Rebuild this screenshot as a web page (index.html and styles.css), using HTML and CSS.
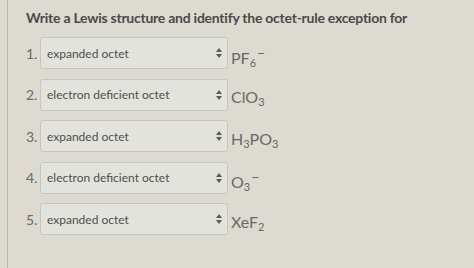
FILE: index.html
```
<!DOCTYPE html>
<html lang="en">
<head>
    <meta charset="UTF-8">
    <title>Octet-rule exceptions</title>
    <link rel="stylesheet" href="styles.css">
</head>
<body>
    <div class="panel">
        <h1 class="question">Write a Lewis structure and identify the octet-rule exception for</h1>
        <ol class="answers">
            <li class="answer">
                <span class="num">1.</span>
                <div class="select"><span>expanded octet</span><i class="arrows"></i></div>
                <span class="formula">PF<sub>6</sub><sup>&minus;</sup></span>
            </li>
            <li class="answer">
                <span class="num">2.</span>
                <div class="select"><span>electron deficient octet</span><i class="arrows"></i></div>
                <span class="formula">ClO<sub>3</sub></span>
            </li>
            <li class="answer">
                <span class="num">3.</span>
                <div class="select"><span>expanded octet</span><i class="arrows"></i></div>
                <span class="formula">H<sub>3</sub>PO<sub>3</sub></span>
            </li>
            <li class="answer">
                <span class="num">4.</span>
                <div class="select"><span>electron deficient octet</span><i class="arrows"></i></div>
                <span class="formula">O<sub>3</sub><sup>&minus;</sup></span>
            </li>
            <li class="answer">
                <span class="num">5.</span>
                <div class="select"><span>expanded octet</span><i class="arrows"></i></div>
                <span class="formula">XeF<sub>2</sub></span>
            </li>
        </ol>
    </div>
</body>
</html>
```

FILE: styles.css
```
* {
    margin: 0;
    padding: 0;
    box-sizing: border-box;
    font-family: Lato, 'Open Sans', sans-serif;
}

body {
    background-color: #dddad2;
    width: 474px;
    height: 268px;
    overflow: hidden;
}

.panel {
    margin-left: 7px;
    border-left: 1px solid #b9b6ae;
    height: 268px;
    padding: 9px 0 0 18px;
}

.question {
    font-size: 14px;
    font-weight: bold;
    color: #4a4a48;
    line-height: 18px;
    letter-spacing: -0.25px;
}

.answers {
    list-style: none;
    margin-top: 10px;
}

.answer {
    display: flex;
    align-items: center;
    height: 32px;
    margin-bottom: 9.5px;
}

.num {
    width: 14px;
    font-size: 14px;
    color: #6b6a64;
}

.select {
    width: 188px;
    height: 32px;
    display: flex;
    align-items: center;
    justify-content: space-between;
    padding: 0 5px 0 6px;
    background-color: #e2e3dc;
    border: 1px solid #c6c6bf;
    border-radius: 3px;
    font-size: 12px;
    color: #4f4f4c;
}

.arrows {
    position: relative;
    width: 6px;
    height: 10px;
}

.arrows::before,
.arrows::after {
    content: "";
    position: absolute;
    left: 0;
    border-left: 3px solid transparent;
    border-right: 3px solid transparent;
}

.arrows::before {
    top: 0;
    border-bottom: 4px solid #5a5a58;
}

.arrows::after {
    bottom: 0;
    border-top: 4px solid #5a5a58;
}

.formula {
    margin-left: 3px;
    margin-top: 6px;
    font-size: 16px;
    color: #696965;
}

.formula sub {
    font-size: 11px;
    vertical-align: -3px;
}

.formula sup {
    font-size: 14px;
    vertical-align: 6px;
    margin-left: 1px;
}
```
